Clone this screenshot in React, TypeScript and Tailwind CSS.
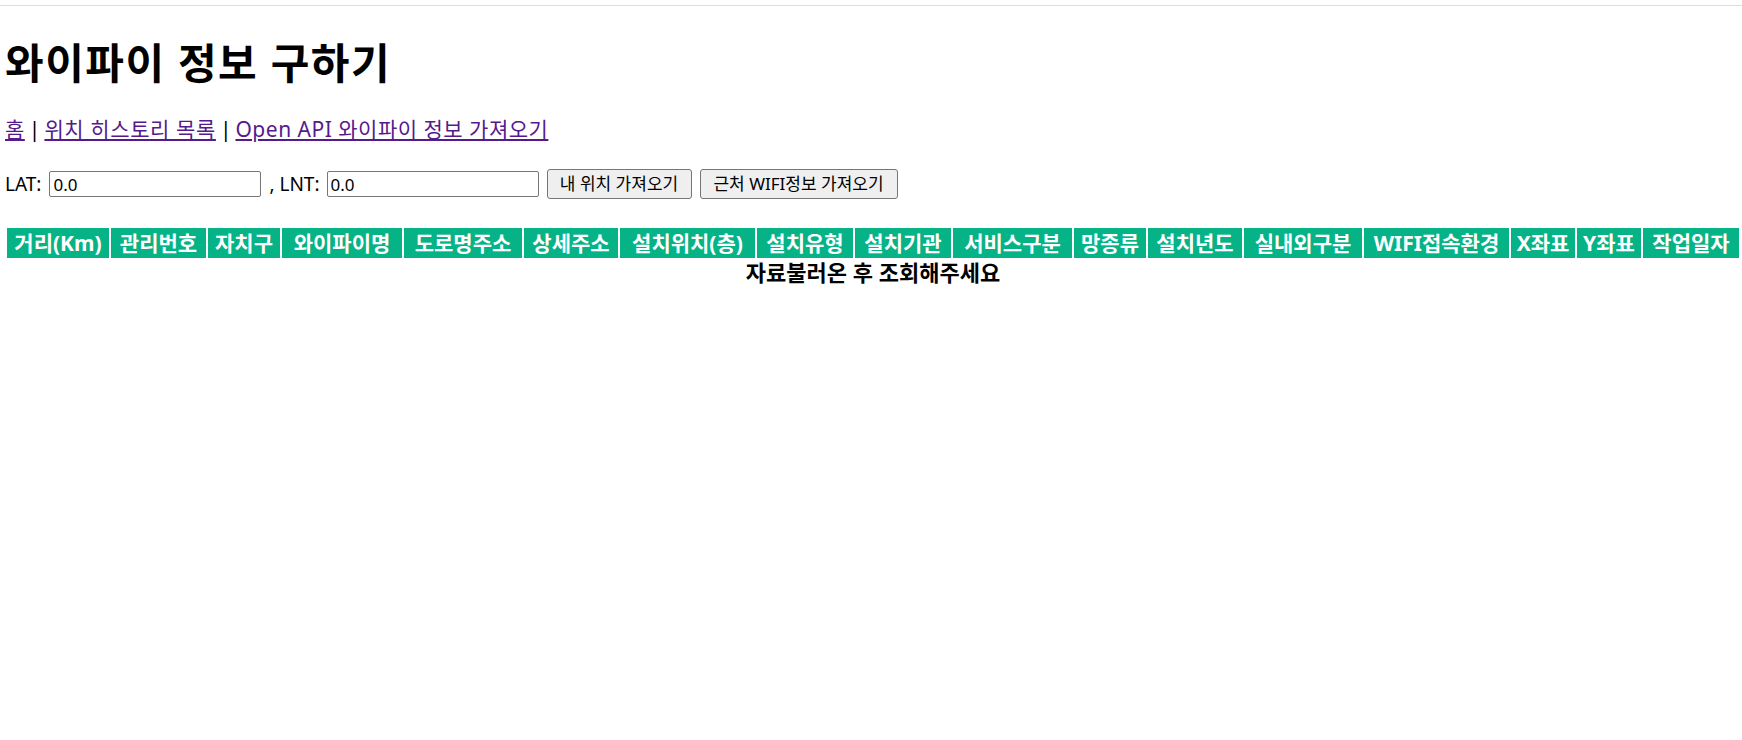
import React from "react";

const columns: { label: string; w: string }[] = [
  { label: "거리(Km)", w: "w-[102px]" },
  { label: "관리번호", w: "w-[95px]" },
  { label: "자치구", w: "w-[72px]" },
  { label: "와이파이명", w: "w-[120px]" },
  { label: "도로명주소", w: "w-[118px]" },
  { label: "상세주소", w: "w-[94px]" },
  { label: "설치위치(층)", w: "w-[135px]" },
  { label: "설치유형", w: "w-[96px]" },
  { label: "설치기관", w: "w-[96px]" },
  { label: "서비스구분", w: "w-[119px]" },
  { label: "망종류", w: "w-[72px]" },
  { label: "설치년도", w: "w-[94px]" },
  { label: "실내외구분", w: "w-[118px]" },
  { label: "WIFI접속환경", w: "w-[145px]" },
  { label: "X좌표", w: "w-[64px]" },
  { label: "Y좌표", w: "w-[64px]" },
  { label: "작업일자", w: "w-[96px]" },
];

const App = () => {
  return (
    <div className="min-h-screen bg-white text-black font-['Noto_Sans','Noto_Sans_CJK_KR',sans-serif]">
      {/* top edge line */}
      <div className="pt-[5px]">
        <div className="h-px bg-[#dedede]" />
      </div>

      <div className="px-[5px]">
        <h1 className="mt-[33px] text-[42px] leading-[48px] font-bold tracking-[1.5px]">와이파이 정보 구하기</h1>

        <div className="mt-[28px] text-[21px] leading-[28px]">
          <a href="#" className="text-[#551a8b] underline tracking-[0.5px]">
            홈
          </a>
          <span className="mx-[4px]">|</span>
          <a href="#" className="text-[#551a8b] underline tracking-[0.6px]">
            위치 히스토리 목록
          </a>
          <span className="mx-[4px]">|</span>
          <a href="#" className="text-[#551a8b] underline tracking-[0.5px]">
            Open API 와이파이 정보 가져오기
          </a>
        </div>

        <div className="mt-[26px] flex h-[30px] items-center text-[19px]">
          <span>LAT:</span>
          <input
            type="text"
            defaultValue="0.0"
            className="ml-[8px] h-[26px] w-[212px] rounded-[2px] border border-[#767676] px-[3px] text-[17px] text-black"
          />
          <span className="ml-[8px]">, LNT:</span>
          <input
            type="text"
            defaultValue="0.0"
            className="ml-[7px] h-[26px] w-[212px] rounded-[2px] border border-[#767676] px-[3px] text-[17px] text-black"
          />
          <button className="ml-[8px] h-[30px] w-[145px] rounded-[3px] border border-[#767676] bg-[#efefef] text-[17px] text-black">
            내 위치 가져오기
          </button>
          <button className="ml-[8px] h-[30px] w-[198px] rounded-[3px] border border-[#767676] bg-[#efefef] text-[17px] text-black">
            근처 WIFI정보 가져오기
          </button>
        </div>

        <table className="mt-[27px] w-[1736px] table-fixed border-separate border-spacing-[2px]">
          <thead>
            <tr>
              {columns.map((c) => (
                <th
                  key={c.label}
                  className={`${c.w} h-[30px] bg-[#06b386] p-0 text-center text-[21px] leading-[28px] font-bold text-white whitespace-nowrap`}
                >
                  {c.label}
                </th>
              ))}
            </tr>
          </thead>
          <tbody>
            <tr>
              <td colSpan={17} className="p-0 text-center text-[22px] leading-[25px] font-bold">
                자료불러온 후 조회해주세요
              </td>
            </tr>
          </tbody>
        </table>
      </div>
    </div>
  );
};

export default App;
